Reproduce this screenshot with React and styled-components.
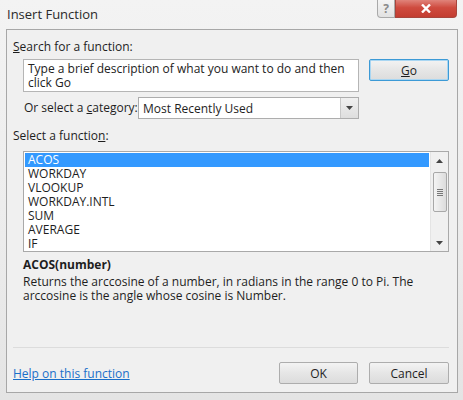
import React from "react";
import styled, { createGlobalStyle } from "styled-components";

const Global = createGlobalStyle`
  html, body { margin: 0; padding: 0; background: #e6e6e6; }
  body { font-family: "Open Sans", "Noto Sans", sans-serif; font-size: 12px; color: #1e1e1e; }
`;

const Window = styled.div`
  width: 463px;
  height: 400px;
  box-sizing: border-box;
  background: linear-gradient(180deg, #f3f3f3 0%, #ececec 60%, #e4e4e4 100%);
  display: flex;
  flex-direction: column;
  overflow: hidden;
`;

const TitleBar = styled.div`
  height: 29px;
  display: flex;
  align-items: flex-start;
  justify-content: space-between;
  padding-left: 7px;
  flex-shrink: 0;
`;

const Title = styled.div`
  font-size: 13px;
  line-height: 29px;
  color: #2a2a2a;
`;

const Caption = styled.div`
  display: flex;
  margin-right: 6px;
`;

const CapButton = styled.div`
  height: 18px;
  width: ${(p) => p.$w}px;
  display: flex;
  align-items: center;
  justify-content: center;
  box-sizing: border-box;
  border: 1px solid ${(p) => (p.$red ? "#a8453c" : "#a9a9a9")};
  border-top: none;
  border-radius: ${(p) => (p.$red ? "0 0 4px 0" : "0 0 0 4px")};
  background: ${(p) =>
    p.$red
      ? "linear-gradient(180deg, #e0837a 0%, #cf4b3f 45%, #c33d31 100%)"
      : "linear-gradient(180deg, #f4f4f4 0%, #e2e2e2 100%)"};
  color: ${(p) => (p.$red ? "#ffffff" : "#8a8a8a")};
  font-weight: bold;
  font-size: 12px;
`;

const Panel = styled.div`
  margin: 0 5px 0 6px;
  height: 364px;
  box-sizing: border-box;
  border: 1px solid #a7a7a7;
  background: #f0f0f0;
  display: flex;
  flex-direction: column;
  padding: 0 8px 0 6px;
`;

const Label = styled.div`
  line-height: 16px;
  margin-top: ${(p) => p.$mt || 0}px;
  color: #1e1e1e;
  white-space: nowrap;
`;

const U = styled.span`
  text-decoration: underline;
  text-underline-offset: 1px;
`;

const Row = styled.div`
  display: flex;
  align-items: ${(p) => p.$align || "flex-start"};
  margin-top: ${(p) => p.$mt || 0}px;
  padding-left: ${(p) => p.$pl || 0}px;
`;

const SearchBox = styled.div`
  width: 336px;
  height: 33px;
  box-sizing: border-box;
  border: 1px solid #b5b5b5;
  background: #ffffff;
  padding: 0 4px;
  line-height: 14px;
  display: flex;
  align-items: center;
  color: #222;
`;

const Button = styled.div`
  width: ${(p) => p.$w || 80}px;
  height: 22px;
  box-sizing: border-box;
  margin-left: ${(p) => p.$ml ?? 10}px;
  border: 1px solid ${(p) => (p.$focus ? "#3c9ad6" : "#adadad")};
  box-shadow: ${(p) => (p.$focus ? "inset 0 0 0 1px #a9d6f2" : "none")};
  border-radius: 2px;
  background: linear-gradient(180deg, #f3f3f3 0%, #e6e6e6 50%, #dcdcdc 100%);
  display: flex;
  align-items: center;
  justify-content: center;
  color: #1e1e1e;
`;

const CatLabel = styled.div`
  width: 114px;
  line-height: 16px;
  white-space: nowrap;
`;

const Select = styled.div`
  width: 221px;
  height: 22px;
  box-sizing: border-box;
  border: 1px solid #adadad;
  background: #ffffff;
  display: flex;
  align-items: stretch;
`;

const SelectValue = styled.div`
  flex: 1;
  padding-left: 4px;
  display: flex;
  align-items: center;
`;

const SelectArrow = styled.div`
  width: 17px;
  border-left: 1px solid #c8c8c8;
  background: linear-gradient(180deg, #f0f0f0, #dedede);
  display: flex;
  align-items: center;
  justify-content: center;
`;

const ListBox = styled.div`
  width: 426px;
  height: 101px;
  box-sizing: border-box;
  border: 1px solid #a9a9a9;
  background: #ffffff;
  display: flex;
  margin-left: 10px;
  margin-top: 7px;
`;

const Items = styled.div`
  flex: 1;
  padding: 1px 1px 0 1px;
`;

const Item = styled.div`
  height: 14px;
  line-height: 14px;
  padding-left: 3px;
  background: ${(p) => (p.$sel ? "#3399ff" : "transparent")};
  color: ${(p) => (p.$sel ? "#ffffff" : "#1e1e1e")};
`;

const ScrollBar = styled.div`
  width: 17px;
  background: #f0f0f0;
  border-left: 1px solid #e4e4e4;
  display: flex;
  flex-direction: column;
  align-items: center;
`;

const ScrollArrow = styled.div`
  height: 17px;
  display: flex;
  align-items: center;
  justify-content: center;
`;

const Thumb = styled.div`
  width: 14px;
  height: 40px;
  margin-top: 3px;
  box-sizing: border-box;
  border: 1px solid #a8a8a8;
  border-radius: 2px;
  background: linear-gradient(90deg, #f4f4f4, #dcdcdc);
  display: flex;
  align-items: center;
  justify-content: center;
`;

const Spacer = styled.div`
  flex: 1;
`;

const Bold = styled.div`
  font-weight: bold;
  margin-top: 5px;
  padding-left: 10px;
  line-height: 16px;
`;

const Desc = styled.div`
  padding-left: 10px;
  line-height: 14px;
  width: 400px;
  margin-top: 2px;
`;

const Separator = styled.div`
  height: 1px;
  background: #dcdcdc;
`;

const Footer = styled.div`
  display: flex;
  align-items: center;
  height: 22px;
  margin: 14px 0 8px 0;
`;

const Link = styled.div`
  color: #1a6fc9;
  text-decoration: underline;
  text-underline-offset: 1px;
  flex: 1;
`;

const items = ["ACOS", "WORKDAY", "VLOOKUP", "WORKDAY.INTL", "SUM", "AVERAGE", "IF"];

const Tri = ({ up }) => (
  <svg width="7" height="4" viewBox="0 0 7 4">
    <path d={up ? "M0 4 L3.5 0 L7 4 Z" : "M0 0 L7 0 L3.5 4 Z"} fill="#444" />
  </svg>
);

export default function App() {
  return (
    <>
      <Global />
      <Window>
        <TitleBar>
          <Title>Insert Function</Title>
          <Caption>
            <CapButton $w={18}>?</CapButton>
            <CapButton $w={62} $red>
              <svg width="10" height="9" viewBox="0 0 10 9">
                <path d="M1 0.5 L9 8.5 M9 0.5 L1 8.5" stroke="#fff" strokeWidth="2.4" />
              </svg>
            </CapButton>
          </Caption>
        </TitleBar>
        <Panel>
          <Label $mt={9}>
            <U>S</U>earch for a function:
          </Label>
          <Row $mt={4} $pl={10}>
            <SearchBox>
              Type a brief description of what you want to do and then click Go
            </SearchBox>
            <Button $focus>
              <span>
                <U>G</U>o
              </span>
            </Button>
          </Row>
          <Row $mt={5} $pl={11} $align="center">
            <CatLabel>
              Or select a <U>c</U>ategory:
            </CatLabel>
            <Select>
              <SelectValue>Most Recently Used</SelectValue>
              <SelectArrow>
                <Tri />
              </SelectArrow>
            </Select>
          </Row>
          <Label $mt={9}>
            Select a functio<U>n</U>:
          </Label>
          <ListBox>
            <Items>
              {items.map((it, i) => (
                <Item key={it} $sel={i === 0}>
                  {it}
                </Item>
              ))}
            </Items>
            <ScrollBar>
              <ScrollArrow>
                <Tri up />
              </ScrollArrow>
              <Thumb>
                <svg width="6" height="7" viewBox="0 0 6 7">
                  <path d="M0 0.5 H6 M0 2.5 H6 M0 4.5 H6 M0 6.5 H6" stroke="#777" strokeWidth="1" />
                </svg>
              </Thumb>
              <Spacer />
              <ScrollArrow>
                <Tri />
              </ScrollArrow>
            </ScrollBar>
          </ListBox>
          <Bold>ACOS(number)</Bold>
          <Desc>
            Returns the arccosine of a number, in radians in the range 0 to Pi. The arccosine is
            the angle whose cosine is Number.
          </Desc>
          <Spacer />
          <Separator />
          <Footer>
            <Link>Help on this function</Link>
            <Button $w={79} $ml={0}>OK</Button>
            <Button $w={80} $ml={11}>Cancel</Button>
          </Footer>
        </Panel>
      </Window>
    </>
  );
}
